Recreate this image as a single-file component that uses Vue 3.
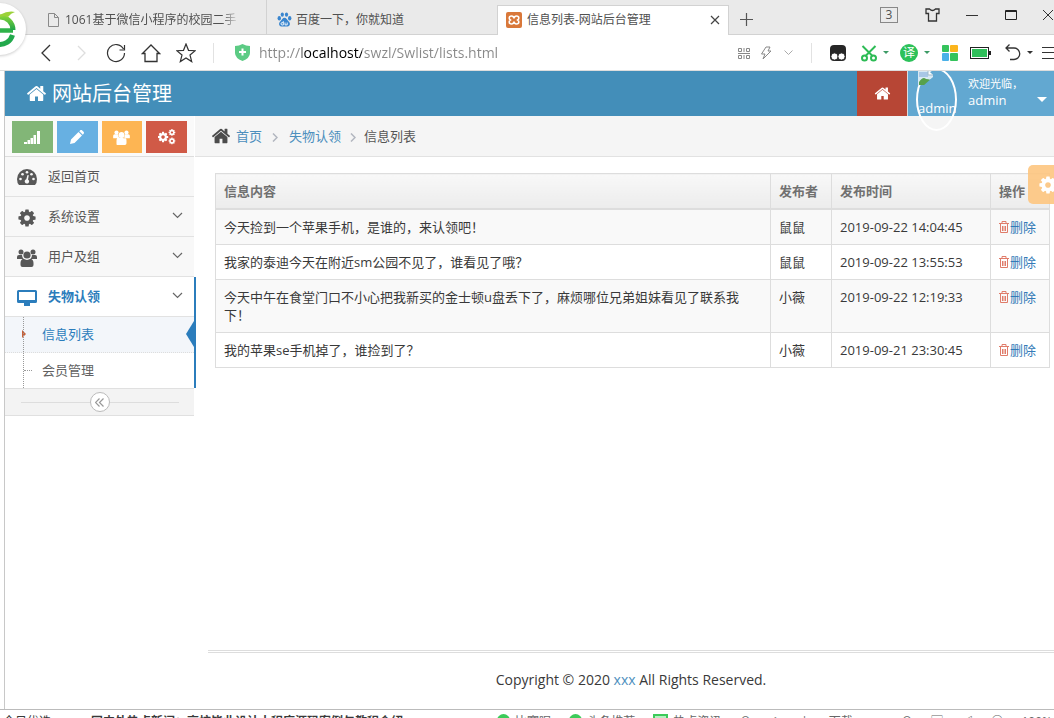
<script setup>
import { ref } from 'vue'

const address = ref('http://localhost/swzl/Swlist/lists.html')

const homePath = 'M1472 992v480q0 26-19 45t-45 19h-384v-384h-256v384h-384q-26 0-45-19t-19-45v-480q0-1 .5-3t.5-3l575-474 575 474q1 2 1 6zm223-69l-62 74q-8 9-21 11h-3q-13 0-21-7l-692-577-692 577q-12 8-24 7-13-2-21-11l-62-74q-8-10-7-23.5t11-21.5l719-599q32-26 76-26t76 26l244 204v-195q0-14 9-23t23-9h192q14 0 23 9t9 23v408l219 182q10 8 11 21.5t-7 23.5z'
const cogPath = 'M1152 896q0-106-75-181t-181-75-181 75-75 181 75 181 181 75 181-75 75-181zm512-109v222q0 12-8 23t-20 13l-185 28q-19 54-39 91 35 50 107 138 10 12 10 25t-9 23q-27 37-99 108t-94 71q-12 0-26-9l-138-108q-44 23-91 38-16 136-29 186-7 28-36 28h-222q-14 0-24.5-8.5t-11.5-21.5l-28-184q-49-16-90-37l-141 107q-10 9-25 9-14 0-25-11-126-114-165-168-7-10-7-23 0-12 8-23 15-21 51-66.5t54-70.5q-27-50-41-99l-183-27q-13-2-21-12.5t-8-23.5v-222q0-12 8-23t19-13l186-28q14-46 39-92-40-57-107-138-10-12-10-24 0-10 9-23 26-36 98.5-107.5t94.5-71.5q13 0 26 10l138 107q44-23 91-38 16-136 29-186 7-28 36-28h222q14 0 24.5 8.5t11.5 21.5l28 184q49 16 90 37l142-107q9-9 24-9 13 0 25 10 129 119 165 170 7 8 7 22 0 12-8 23-15 21-51 66.5t-54 70.5q26 50 41 98l183 28q13 2 21 12.5t8 23.5z'

const rows = [
  { text: '今天捡到一个苹果手机，是谁的，来认领吧！', user: '鼠鼠', time: '2019-09-22 14:04:45' },
  { text: '我家的泰迪今天在附近sm公园不见了，谁看见了哦？', user: '鼠鼠', time: '2019-09-22 13:55:53' },
  { text: '今天中午在食堂门口不小心把我新买的金士顿u盘丢下了，麻烦哪位兄弟姐妹看见了联系我下！', user: '小薇', time: '2019-09-22 12:19:33' },
  { text: '我的苹果se手机掉了，谁捡到了？', user: '小薇', time: '2019-09-21 23:30:45' },
]
</script>

<template>
  <div class="shell">
    <header class="tabs">
      <div class="logo">
        <svg width="52" height="52" viewBox="0 0 52 52" aria-hidden="true">
          <defs>
            <linearGradient id="leaf" x1="0" y1="0" x2="0" y2="1">
              <stop offset="0" stop-color="#7fd13b" /><stop offset="1" stop-color="#1fa548" />
            </linearGradient>
          </defs>
          <path d="M13 27.500h26" stroke="#2fb24a" stroke-width="4.500" fill="none" />
          <path d="M13 27a13 13 0 0 1 26 0" stroke="url(#leaf)" stroke-width="5" fill="none" />
          <path d="M13 28a13 13 0 0 0 25.500 4" stroke="#22a94c" stroke-width="5" fill="none" />
          <path d="M22 14Q33 7 41 9Q37 10 34 14Q28 12 22 16z" fill="#9bd23a" />
        </svg>
      </div>
      <button class="tab">
        <svg class="file" width="13" height="14" viewBox="0 0 13 14" fill="none" stroke="#8a8a8a"><path d="M1.500.5h6l4 4v9h-10zM7.500.5v4h4" /></svg>
        <span class="fade">1061基于微信小程序的校园二手</span>
      </button>
      <button class="tab second">
        <svg width="15" height="15" viewBox="0 0 15 15" fill="#3a86cf"><ellipse cx="2.300" cy="6.300" rx="1.700" ry="2.200" /><ellipse cx="5.300" cy="2.600" rx="1.600" ry="2.200" /><ellipse cx="9.500" cy="2.600" rx="1.600" ry="2.200" /><ellipse cx="12.700" cy="6.300" rx="1.700" ry="2.200" /><path d="M7.500 5.800C9.500 5.800 10 8 11.500 9.200C14 11.300 13 14.500 10 14.500C8.500 14.500 6.500 14.500 5 14.500C2 14.500 1 11.300 3.500 9.200C5 8 5.500 5.800 7.500 5.800" /><path d="M6.300 9.200v3.800H5.200a1.200 1.200 0 0 1 0-2.400h1M8 10.500v2.400h2.200v-2.400" fill="none" stroke="#fff" stroke-width=".9" /></svg>
        <span>百度一下，你就知道</span>
      </button>
      <div class="tab active">
        <svg width="16" height="16" viewBox="0 0 16 16"><rect width="16" height="16" rx="2" fill="#d9783a" /><path d="M8 6.300Q7.600 4 5.600 4Q3.200 4 3.200 6Q3.200 7.300 4.300 8Q3.200 8.700 3.200 10Q3.200 12 5.600 12Q7.600 12 8 9.700Q8.400 12 10.400 12Q12.800 12 12.800 10Q12.800 8.700 11.700 8Q12.800 7.300 12.800 6Q12.800 4 10.400 4Q8.400 4 8 6.300z" fill="none" stroke="#fff" stroke-width="1.600" /></svg>
        <span>信息列表-网站后台管理</span>
        <button class="plain close" aria-label="关闭标签"><svg width="10" height="10" viewBox="0 0 10 10" stroke="#444" stroke-width="1.200"><path d="M1 1l8 8M9 1L1 9" /></svg></button>
      </div>
      <button class="plain add" aria-label="新建标签"><svg width="13" height="13" viewBox="0 0 13 13" stroke="#555" stroke-width="1.200"><path d="M6.500 0v13M0 6.500h13" /></svg></button>
      <div class="window">
        <button class="plain"><span class="count">3</span></button>
        <button class="plain" aria-label="皮肤"><svg width="15" height="14" viewBox="0 0 15 14" fill="none" stroke="#333" stroke-width="1.300"><path d="M1 1h3.500q3 3 6 0H14v4.500h-2.500V13h-8V5.500H1z" /></svg></button>
        <button class="plain" aria-label="最小化"><svg width="12" height="12" viewBox="0 0 12 12" stroke="#333"><path d="M0 6.500h12" /></svg></button>
        <button class="plain" aria-label="最大化"><svg width="12" height="10" viewBox="0 0 12 10" fill="none" stroke="#222"><path d="M.5.5h11v9H.5zM.5 1.500h11" /></svg></button>
        <button class="plain last" aria-label="关闭"><svg width="12" height="12" viewBox="0 0 12 12" stroke="#333"><path d="M1 1l10 10M11 1L1 11" /></svg></button>
      </div>
    </header>

    <div class="toolbar">
      <nav class="moves">
        <button class="plain" aria-label="后退"><svg width="12" height="18" viewBox="0 0 12 18" fill="none" stroke="#333" stroke-width="1.300"><path d="M10 1L2 9l8 8" /></svg></button>
        <button class="plain" aria-label="前进"><svg width="12" height="18" viewBox="0 0 12 18" fill="none" stroke="#dedede" stroke-width="1.300"><path d="M3 2l7 7-7 7" /></svg></button>
        <button class="plain" aria-label="刷新"><svg width="20" height="20" viewBox="0 0 20 20" fill="none" stroke="#333" stroke-width="1.200"><path d="M17.500 6A8.500 8.500 0 1 0 18.500 10M18.500 2v5h-5" /></svg></button>
        <button class="plain" aria-label="主页"><svg width="20" height="20" viewBox="0 0 20 20" fill="none" stroke="#333" stroke-width="1.300"><path d="M1.500 10.500L10 2l8.500 8.500H16v8H4v-8z" /></svg></button>
        <button class="plain" aria-label="收藏"><svg width="20" height="20" viewBox="0 0 20 20" fill="none" stroke="#333" stroke-width="1.200"><path d="M10 1l2.500 6.300 6.700.4-5.200 4.300 1.700 6.600L10 15l-5.700 3.600L6 12 .8 7.700l6.700-.4z" /></svg></button>
      </nav>
      <i class="rule"></i>
      <svg class="shield" width="15" height="17" viewBox="0 0 15 17"><path d="M7.500 0Q11 2 15 2v7q0 5-7.500 8Q0 14 0 9V2Q4 2 7.500 0" fill="#5ccb84" /><path d="M7.500 4.500v7M4 8h7" stroke="#fff" stroke-width="2" /></svg>
      <input v-model="address" class="address" type="text" aria-label="地址" spellcheck="false" />
      <div class="tools">
        <button class="plain" aria-label="二维码"><svg width="12" height="12" viewBox="0 0 12 12" fill="none" stroke="#888"><path d="M.5 1.500h3v3h-3zM8.500 1.500h3v3h-3zM.5 8.500h3v3h-3zM8.500 8.500h3v3h-3zM6 1v4M6 8v4M0 6.500h12" /></svg></button>
        <button class="plain" aria-label="极速"><svg width="12" height="14" viewBox="0 0 12 14" fill="none" stroke="#888"><path d="M6 1h4L8 5h3L3 13l2-5H1.500z" /></svg></button>
        <button class="plain" aria-label="更多"><svg width="9" height="6" viewBox="0 0 9 6" fill="none" stroke="#aaa"><path d="M.5.500l4 4 4-4" /></svg></button>
        <i class="rule"></i>
        <div class="apps">
          <button class="plain wide" aria-label="扩展"><svg width="18" height="18" viewBox="0 0 18 18"><rect x="1" y="1" width="16" height="16" rx="4" fill="#262626" /><circle cx="5.500" cy="12.500" r="3.600" fill="#fff" stroke="#333" /><circle cx="12.500" cy="12.500" r="3.600" fill="#fff" stroke="#333" /></svg></button>
          <button class="plain pair" aria-label="截图"><svg width="16" height="18" viewBox="0 0 16 18" fill="none" stroke="#2dbb55" stroke-width="2"><path d="M1.500 2l10 10M14.500 2l-10 10" /><circle cx="3.500" cy="14" r="2.500" /><circle cx="12.500" cy="14" r="2.500" /></svg><i class="caret green"></i></button>
          <button class="plain pair" aria-label="翻译"><span class="yi">译</span><i class="caret green"></i></button>
          <button class="plain" aria-label="应用"><svg width="16" height="16" viewBox="0 0 16 16"><rect width="7" height="7" rx="1" fill="#35c35c" /><rect x="8" width="8" height="7" rx="1" fill="#fbb51d" /><rect y="8" width="7" height="8" rx="1" fill="#4bb1e8" /><rect x="8" y="8" width="8" height="8" rx="1" fill="#35c35c" /></svg></button>
          <button class="plain battery" aria-label="电量"><svg width="22" height="12" viewBox="0 0 22 12"><rect x=".5" y=".5" width="18" height="11" fill="#fff" stroke="#222" /><rect x="2" y="2" width="15" height="8" fill="#2fc05a" /><path d="M20 4v4" stroke="#222" stroke-width="2" /></svg></button>
          <button class="plain pair" aria-label="撤销"><svg width="16" height="17" viewBox="0 0 16 17" fill="none" stroke="#333" stroke-width="1.300"><path d="M4.500.5L1 4l3.500 3.500M1 4h8a5.500 5.500 0 0 1 0 11.500H5" /></svg><i class="caret"></i></button>
          <button class="plain menu" aria-label="菜单"><svg width="13" height="14" viewBox="0 0 13 14" stroke="#333"><path d="M0 1.500h13M0 6.500h13M0 12.500h13" /></svg></button>
        </div>
      </div>
    </div>

    <div class="page">
      <header class="navbar">
        <a class="brand" href="#"><svg width="21" height="21" viewBox="0 0 1792 1792" fill="currentColor"><path :d="homePath" /></svg>网站后台管理</a>
        <a class="gohome" href="#" aria-label="首页"><svg width="17" height="17" viewBox="0 0 1792 1792" fill="currentColor"><path :d="homePath" /></svg></a>
        <button class="user">
          <span class="avatar">
            <svg width="15" height="15" viewBox="0 0 15 15"><path d="M0 0h11l4 4v3L0 15z" fill="#d8e9f3" /><path d="M1 1h9v5H1z" fill="#a9c7e6" /><path d="M1 14V11Q5 5 8 8Q13 8 15 12v2z" fill="#57a14c" /><path d="M10 0v4h5" fill="#fff" stroke="#9ebacb" /><path d="M15 6L5 15h10z" fill="#62a8d1" /></svg>
            <span>admin</span>
          </span>
          <span class="welcome"><small>欢迎光临，</small>admin</span>
          <i class="caret light"></i>
        </button>
      </header>

      <div class="body">
        <aside class="sidebar">
          <div class="shortcuts">
            <button class="sc g" aria-label="统计"><svg width="16" height="14" viewBox="0 0 16 14" fill="#fff"><path d="M0 12h3v2H0zM3.500 10h2.500v4H3.500zM6.500 8H9v6H6.500zM9.500 5H12v9H9.500zM13 1h3v13h-3z" /></svg></button>
            <button class="sc b" aria-label="编辑"><svg width="14" height="14" viewBox="0 0 14 14" fill="#fff"><path d="M1 9.500L8.500 2l3.500 3.500L4.500 13 0 14zM9.300 1.200L10.500 0q1-.3 1.500.2L13.800 2q.4.800 0 1.500l-1 1.200z" /></svg></button>
            <button class="sc o" aria-label="用户"><svg width="17" height="15" viewBox="0 0 20 18" fill="#fff"><circle cx="4" cy="3" r="2.500" /><circle cx="16" cy="3" r="2.500" /><circle cx="10" cy="6" r="3.500" /><path d="M0 10V7q0-2 2-2h4q0 3 2 5H0zM20 10V7q0-2-2-2h-4q0 3-2 5h8zM4 17v-4q0-4 3-4h6q3 0 3 4v3q0 2-2 2H6q-2 0-2-1" /></svg></button>
            <button class="sc r" aria-label="设置"><svg width="18" height="16" viewBox="0 0 36 32" fill="#fff"><path transform="translate(-2 4) scale(.0135)" :d="cogPath" /><path transform="translate(20 -1) scale(.0088)" :d="cogPath" /><path transform="translate(20 16) scale(.0088)" :d="cogPath" /></svg></button>
          </div>
          <ul class="nav">
            <li><a href="#"><svg width="20" height="18" viewBox="0 0 20 18"><path d="M2 16Q0 14 0 10a10 10 0 0 1 20 0q0 4-2 6z" fill="currentColor" /><g fill="#f8f8f8"><circle cx="3.500" cy="10" r="1.300" /><circle cx="5.500" cy="5.300" r="1.300" /><circle cx="10" cy="3.300" r="1.300" /><circle cx="14.500" cy="5.300" r="1.300" /><circle cx="16.500" cy="10" r="1.300" /><path d="M10.500 6l1.300.3-.8 4.200a2.200 2.200 0 1 1-1.700-.2z" /></g></svg>返回首页</a></li>
            <li><a href="#"><svg width="20" height="20" viewBox="0 0 1792 1792" fill="currentColor"><path :d="cogPath" /></svg>系统设置<svg class="down" width="11" height="7" viewBox="0 0 11 7"><path d="M1 1l4.500 4.500L10 1" /></svg></a></li>
            <li><a href="#"><svg width="20" height="18" viewBox="0 0 20 18" fill="currentColor"><circle cx="4" cy="3" r="2.500" /><circle cx="16" cy="3" r="2.500" /><circle cx="10" cy="6" r="3.600" /><path d="M0 10V8q0-2 2-2h3q0 2 1.500 4zM20 10V8q0-2-2-2h-3q0 2-1.500 4zM3.500 16v-2q0-3.500 3-4.200Q10 12 13.500 9.800q3 .7 3 4.200v2q0 2-2 2h-9q-2 0-2-2" /></svg>用户及组<svg class="down" width="11" height="7" viewBox="0 0 11 7"><path d="M1 1l4.500 4.500L10 1" /></svg></a></li>
            <li class="open">
              <a href="#"><svg width="20" height="18" viewBox="0 0 20 18" fill="currentColor"><path fill-rule="evenodd" d="M1.500 1h17q1.500 0 1.500 1.500v10q0 1.500-1.500 1.500H13v3H7v-3H1.500Q0 14 0 12.500v-10Q0 1 1.500 1zM2 3v8h16V3z" /></svg>失物认领<svg class="down" width="11" height="7" viewBox="0 0 11 7"><path d="M1 1l4.500 4.500L10 1" /></svg></a>
              <ul class="sub">
                <li class="current"><a href="#">信息列表</a></li>
                <li><a href="#">会员管理</a></li>
              </ul>
            </li>
          </ul>
          <div class="fold"><button aria-label="折叠菜单"><svg width="10" height="9" viewBox="0 0 10 9" fill="none" stroke="#999" stroke-width="1.200"><path d="M4.500.5l-4 4 4 4M8.500.5l-4 4 4 4" /></svg></button></div>
        </aside>

        <main class="main">
          <nav class="crumbs">
            <svg width="20" height="20" viewBox="0 0 1792 1792" fill="#4c4c4c"><path :d="homePath" /></svg>
            <a href="#">首页</a>
            <svg class="sep" width="6" height="9" viewBox="0 0 6 9"><path d="M1 .5l4 4-4 4" /></svg>
            <a href="#">失物认领</a>
            <svg class="sep" width="6" height="9" viewBox="0 0 6 9"><path d="M1 .5l4 4-4 4" /></svg>
            <span>信息列表</span>
          </nav>
          <button class="gear" aria-label="页面设置"><svg width="20" height="20" viewBox="0 0 1792 1792" fill="#fff"><path :d="cogPath" /></svg></button>
          <section class="content">
            <table>
              <colgroup><col /><col class="c-user" /><col class="c-time" /><col class="c-op" /></colgroup>
              <thead><tr><th>信息内容</th><th>发布者</th><th>发布时间</th><th>操作</th></tr></thead>
              <tbody>
                <tr v-for="row in rows" :key="row.time">
                  <td>{{ row.text }}</td><td>{{ row.user }}</td><td class="time">{{ row.time }}</td>
                  <td><a class="del" href="#"><svg width="10" height="12" viewBox="0 0 10 12" fill="none" stroke="#e07c6a"><path d="M0 2.500h10M3 2V.5h4V2M1.500 3v8.500h7V3M3.500 5v5M5 5v5M6.500 5v5" /></svg>删除</a></td>
                </tr>
              </tbody>
            </table>
          </section>
          <footer class="footer">Copyright © 2020 <a href="#">xxx</a> All Rights Reserved.</footer>
        </main>
      </div>
    </div>

    <footer class="status">
      <strong>今日优选</strong>
      <b class="headline">国内外热点新闻：高校毕业设计小程序源码案例与教程介绍</b>
      <span class="right">
        <span class="entry"><i class="dot"></i>比赛呢</span>
        <span class="entry"><i class="dot"></i>头条推荐</span>
        <span class="entry"><i class="box"></i>热点资讯</span>
        <span>⊘</span><span>♙</span><span>↓</span><span>下载</span><span>▬</span><span>⊘</span><span>▢</span><span>◁</span><span>○</span><span>100%</span>
      </span>
    </footer>
  </div>
</template>

<style>
html, body { margin: 0; background: #fff; }
</style>

<style scoped>
* { box-sizing: border-box; }
.shell { display: flex; flex-direction: column; height: 100vh; overflow: hidden; font: 13px/18px "Open Sans", "Noto Sans CJK SC", sans-serif; color: #393939; }
button, input { font: inherit; color: inherit; }
a { text-decoration: none; color: #4c8fbd; }
ul { list-style: none; margin: 0; padding: 0; }
svg { flex: none; display: block; }
.plain { border: 0; background: none; padding: 0; display: flex; align-items: center; justify-content: center; }

.tabs { position: relative; z-index: 3; flex: none; display: flex; height: 35px; padding-left: 37px; background: #eaeaea; border-bottom: 1px solid #d2d2d2; font-size: 12px; color: #505050; }
.logo { position: absolute; left: -26px; top: 3px; width: 52px; height: 52px; border-radius: 50%; background: #fff; box-shadow: 0 1px 3px #0003; }
.tab { display: flex; align-items: center; width: 229px; padding: 5px 10px 0; border: 0; background: none; gap: 5px; white-space: nowrap; }
.tab.second { width: 231px; border-left: 1px solid #d2d2d2; gap: 4px; }
.fade { width: 174px; overflow: hidden; mask-image: linear-gradient(90deg, #000 90%, transparent); text-align: left; }
.tab.active { position: relative; width: 232px; height: 30px; margin-top: 5px; margin-bottom: -1px; padding: 0 8px 2px; background: #fff; border: 1px solid #d2d2d2; border-bottom: 0; }
.close { margin-left: auto; }
.add { width: 34px; padding-top: 5px; }
.window { display: flex; margin-left: auto; height: 30px; align-items: center; }
.window .plain { width: 39px; height: 30px; }
.window .plain:first-child { width: 48px; }
.window .last { width: 24px; justify-content: flex-start; padding-left: 12px; }
.count { width: 18px; height: 16px; line-height: 14px; border: 1px solid #888; text-align: center; }

.toolbar { position: relative; z-index: 2; flex: none; display: flex; align-items: center; height: 36px; padding-left: 28px; background: #fff; border-bottom: 1px solid #ddd; }
.moves { display: flex; }
.moves .plain { width: 35px; }
.rule { width: 1px; height: 20px; background: #e2e2e2; margin: 0 12px; }
.moves + .rule { margin: 0 21px 0 10px; }
.address { flex: 1; min-width: 0; margin-left: 8px; border: 0; padding: 0 0 0 1px; outline: 0; font-size: 14px; line-height: 20px; color: transparent; background: linear-gradient(90deg, #888 44px, #000 44px, #000 104px, #888 104px); background-clip: text; -webkit-background-clip: text; }
.tools { display: flex; align-items: center; flex: none; }
.tools > .plain { width: 22px; }
.apps { display: flex; align-items: center; gap: 6px; }
.wide { width: 28px; }
.apps .pair { width: 34px; gap: 6px; }
.battery { width: 26px; margin-right: 2px; }
.menu { width: 12px; overflow: hidden; justify-content: flex-start; }
.apps > .plain:nth-child(4) { width: 24px; }
.yi { width: 18px; height: 18px; line-height: 18px; border-radius: 50%; background: #2cc15a; color: #fff; font-size: 12px; }
.caret { border: 3px solid transparent; border-top-color: #333; border-bottom: 0; }
.caret.green { border-top-color: #3c9b66; }
.caret.light { border-width: 5px 5px 0; border-top-color: #fff; }

.page { flex: 1; min-height: 0; display: flex; flex-direction: column; margin-left: 4px; border-left: 1px solid #c8c8c8; }
.navbar { position: relative; z-index: 1; flex: none; display: flex; height: 45px; background: #438eb9; color: #fff; }
.brand { flex: 1; display: flex; align-items: center; gap: 5px; padding-left: 21px; font-size: 20px; color: #fff; }
.gohome { width: 50px; display: flex; align-items: center; justify-content: center; background: #b74635; color: #fff; }
.user { position: relative; width: 147px; display: flex; align-items: center; border: 0; border-left: 1px solid #ddd; background: #62a8d1; color: #fff; padding: 0 7px 0 60px; text-align: left; }
.avatar { position: absolute; left: 8px; top: -3px; width: 41px; height: 63px; border: 2px solid #fff; border-radius: 50%; padding-top: 1px; }
.avatar span { display: block; margin-top: 13px; }
.welcome { flex: 1; line-height: 16px; padding-bottom: 3px; white-space: nowrap; }
.welcome small { display: block; font-size: 11px; }
.user .caret { margin-top: 12px; }

.body { flex: 1; min-height: 0; display: flex; }
.sidebar { flex: none; width: 190px; }
.shortcuts { display: grid; grid-template-columns: repeat(4, 1fr); gap: 4px; height: 41px; width: 189px; padding: 5px 7px 3px; background: #fafafa; border-bottom: 1px solid #ddd; }
.sc { border: 0; padding: 0; display: flex; align-items: center; justify-content: center; }
.g { background: #82b677; }
.b { background: #67b0e2; }
.o { background: #fdb553; }
.r { background: #d05a47; }
.nav > li { width: 189px; }
.nav > li > a { display: flex; align-items: center; height: 40px; padding: 0 11px 2px 12px; border-bottom: 1px solid #e2e2e2; background: #f8f8f8; color: #585858; }
.nav > li > a > svg:first-child { margin-right: 11px; margin-top: 4px; }
.down { margin-left: auto; fill: none; stroke: #666; stroke-width: 1.2; }
.nav > li.open { width: 191px; border-right: 2px solid #2b7dbc; }
.nav > li.open > a { background: #fff; color: #2b7dbc; font-weight: 700; }
.sub { position: relative; background: #fff; }
.sub::before { content: ""; position: absolute; z-index: 1; left: 18px; top: 0; bottom: 0; border-left: 1px dotted #999; }
.sub a { display: block; height: 36px; line-height: 34px; padding-left: 37px; color: #616161; border-bottom: 1px dotted #ddd; }
.sub li { position: relative; }
.sub li:last-child a { height: 35px; border: 0; }
.sub li:last-child::before { content: ""; position: absolute; left: 19px; top: 17px; width: 8px; border-top: 1px dotted #999; }
.sub .current a { color: #2b7dbc; background: #f3f6fa; }
.sub .current::before { content: ""; position: absolute; left: 17px; top: 13px; border: 4px solid transparent; border-left-color: #c86139; border-right: 0; }
.sub .current::after { content: ""; position: absolute; right: 0; top: 4px; border: 13px solid transparent; border-right: 8px solid #2b7dbc; border-left: 0; }
.fold { display: flex; justify-content: center; align-items: center; width: 189px; height: 28px; background: linear-gradient(#ddd, #ddd) 16px 13px / 158px 1px no-repeat #f3f3f3; border: solid #e0e0e0; border-width: 1px 0; }
.fold button { display: flex; align-items: center; justify-content: center; width: 20px; height: 20px; padding: 0; border: 1px solid #bbb; border-radius: 50%; background: #fff; }

.main { position: relative; flex: 1; min-width: 0; display: flex; flex-direction: column; }
.crumbs { flex: none; display: flex; align-items: center; height: 41px; padding-left: 16px; background: #f5f5f5; border-bottom: 1px solid #e2e2e2; color: #555; }
.crumbs a:first-of-type { margin-left: 5px; }
.sep { margin: 2px 11px 0 10px; fill: none; stroke: #b2b6bf; stroke-width: 1.5; }
.sep:last-of-type { margin: 2px 8px 0 9px; }
.gear { position: absolute; right: 0; top: 49px; width: 26px; height: 39px; padding: 0 0 0 10px; border: 0; border-radius: 5px 0 0 5px; background: #fdc580e6; overflow: hidden; }
.content { flex: 1; padding: 16px 4px 0 20px; }
table { width: 100%; table-layout: fixed; border-collapse: collapse; }
.c-user { width: 61px; }
.c-time { width: 159px; }
.c-op { width: 59px; }
th, td { padding: 8px; border: 1px solid #ddd; text-align: left; vertical-align: top; }
th { color: #707070; background: linear-gradient(#f8f8f8, #ececec); border-bottom-width: 2px; }
td { background: #fff; }
tbody tr:nth-child(odd) td { background: #f9f9f9; }
.time { white-space: nowrap; }
.del { display: flex; align-items: center; gap: 1px; color: #337ab7; white-space: nowrap; }
.footer { flex: none; height: 59px; margin-left: 13px; border-top: 3px double #ddd; text-align: center; font-size: 14px; line-height: 54px; }

.status { flex: none; position: relative; display: flex; height: 9px; overflow: hidden; border-top: 1px solid #bbb; padding: 4px 2px 0 3px; font-size: 12px; line-height: 16px; white-space: nowrap; }
.status strong { font-weight: 400; width: 88px; }
.headline { width: 330px; overflow: hidden; }
.right { flex: 1; display: flex; justify-content: space-between; margin-left: 76px; color: #666; }
.entry { display: flex; gap: 5px; }
.dot { width: 13px; height: 13px; border-radius: 50%; background: #3ccb5a; }
.box { width: 15px; height: 13px; border: 2px solid #3ccb5a; background: #b6efc3; }
</style>
